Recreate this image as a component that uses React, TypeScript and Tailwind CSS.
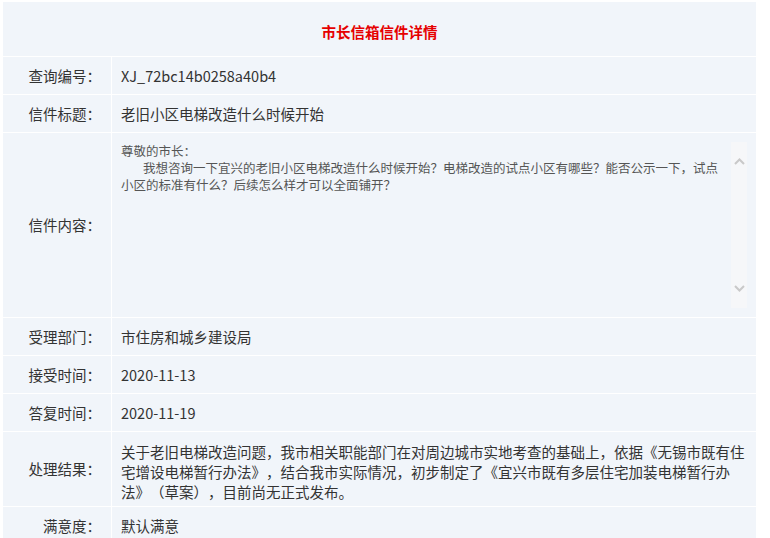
import React from "react";

const font = { fontFamily: '"Noto Sans CJK SC", "Microsoft YaHei", sans-serif' };

function Row({ label, children, h }: { label: string; children: React.ReactNode; h: string }) {
  return (
    <div className={`grid grid-cols-[108px_644px] gap-px ${h}`}>
      <div className="bg-[#f1f5fa] flex items-center justify-end pr-[10px] text-[14.5px] text-[#333]">{label}</div>
      <div className="bg-[#f1f5fa] flex items-center pl-[9px] text-[14.5px] text-[#333]">{children}</div>
    </div>
  );
}

export default function App() {
  return (
    <div
      className="w-[770px] h-[538px] overflow-hidden bg-white pl-[3px] pt-[2px] [text-spacing-trim:space-all]"
      style={font}
    >
      <div className="w-[753px] flex flex-col gap-px bg-white">
        <div className="h-[54px] bg-[#f1f5fa] flex items-center justify-center pt-[5px] text-[14.5px] font-bold text-[#e60000]">
          市长信箱信件详情
        </div>
        <Row label="查询编号：" h="h-[37px]">XJ_72bc14b0258a40b4</Row>
        <Row label="信件标题：" h="h-[37px]">老旧小区电梯改造什么时候开始</Row>
        <div className="grid grid-cols-[108px_644px] gap-px h-[184px]">
          <div className="bg-[#f1f5fa] flex items-center justify-end pr-[10px] text-[14.5px] text-[#333]">信件内容：</div>
          <div className="bg-[#f1f5fa] pl-[9px] pt-[9px]">
            <div className="flex h-[166px]">
              <div className="w-[610px] text-[12.5px] leading-[17px] text-[#555] whitespace-nowrap">
                <div>尊敬的市长：</div>
                <div>
                  <span className="inline-block w-[22px]"></span>
                  我想咨询一下宜兴的老旧小区电梯改造什么时候开始？电梯改造的试点小区有哪些？能否公示一下，试点
                </div>
                <div>小区的标准有什么？后续怎么样才可以全面铺开？</div>
              </div>
              <div className="w-[16px] h-[166px] bg-[#f6f7f9] flex flex-col items-center justify-between py-[16px]">
                <svg width="11" height="7" viewBox="0 0 11 7">
                  <path d="M1 6 L5.5 1.5 L10 6" fill="none" stroke="#c9c9c9" strokeWidth="2" />
                </svg>
                <svg width="11" height="7" viewBox="0 0 11 7">
                  <path d="M1 1 L5.5 5.5 L10 1" fill="none" stroke="#c9c9c9" strokeWidth="2" />
                </svg>
              </div>
            </div>
          </div>
        </div>
        <Row label="受理部门：" h="h-[37px]">市住房和城乡建设局</Row>
        <Row label="接受时间：" h="h-[37px]">2020-11-13</Row>
        <Row label="答复时间：" h="h-[37px]">2020-11-19</Row>
        <div className="grid grid-cols-[108px_644px] gap-px h-[74px]">
          <div className="bg-[#f1f5fa] flex items-center justify-end pr-[10px] text-[14.5px] text-[#333]">处理结果：</div>
          <div className="bg-[#f1f5fa] pl-[9px] pt-[10px] text-[14.5px] leading-[20px] text-[#333] whitespace-nowrap">
            <div>关于老旧电梯改造问题，我市相关职能部门在对周边城市实地考查的基础上，依据《无锡市既有住</div>
            <div>宅增设电梯暂行办法》，结合我市实际情况，初步制定了《宜兴市既有多层住宅加装电梯暂行办</div>
            <div>法》（草案），目前尚无正式发布。</div>
          </div>
        </div>
        <Row label="满意度：" h="h-[37px]">默认满意</Row>
      </div>
    </div>
  );
}
